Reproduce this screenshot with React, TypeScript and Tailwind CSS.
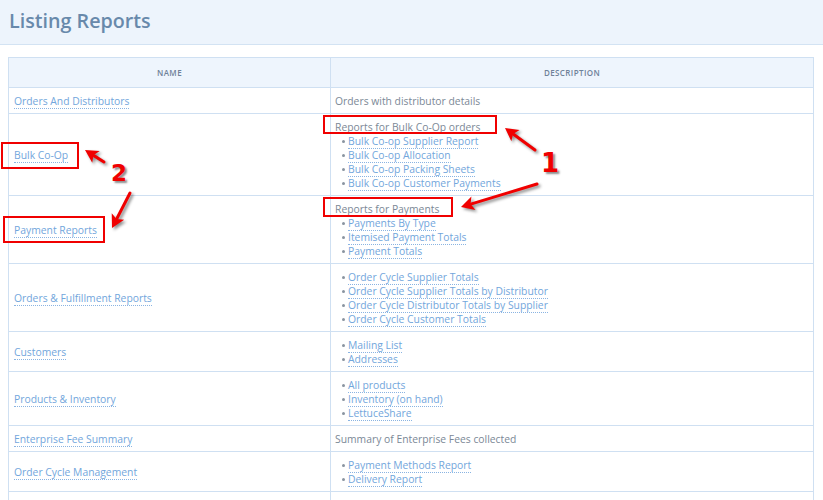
import React from "react";

type Row = {
  name: string;
  heading?: string;
  text?: string;
  items?: string[];
};

const rows: Row[] = [
  { name: "Orders And Distributors", text: "Orders with distributor details" },
  {
    name: "Bulk Co-Op",
    heading: "Reports for Bulk Co-Op orders",
    items: [
      "Bulk Co-op Supplier Report",
      "Bulk Co-op Allocation",
      "Bulk Co-op Packing Sheets",
      "Bulk Co-op Customer Payments",
    ],
  },
  {
    name: "Payment Reports",
    heading: "Reports for Payments",
    items: ["Payments By Type", "Itemised Payment Totals", "Payment Totals"],
  },
  {
    name: "Orders & Fulfillment Reports",
    items: [
      "Order Cycle Supplier Totals",
      "Order Cycle Supplier Totals by Distributor",
      "Order Cycle Distributor Totals by Supplier",
      "Order Cycle Customer Totals",
    ],
  },
  { name: "Customers", items: ["Mailing List", "Addresses"] },
  {
    name: "Products & Inventory",
    items: ["All products", "Inventory (on hand)", "LettuceShare"],
  },
  { name: "Enterprise Fee Summary", text: "Summary of Enterprise Fees collected" },
  {
    name: "Order Cycle Management",
    items: ["Payment Methods Report", "Delivery Report"],
  },
];

function Link({ children }: { children: React.ReactNode }) {
  return (
    <span className="text-[#72a6dc] border-b border-dotted border-[#8ab4e2]">
      {children}
    </span>
  );
}

function Arrow({
  x1,
  y1,
  x2,
  y2,
}: {
  x1: number;
  y1: number;
  x2: number;
  y2: number;
}) {
  const dx = x2 - x1;
  const dy = y2 - y1;
  const len = Math.sqrt(dx * dx + dy * dy);
  const ux = dx / len;
  const uy = dy / len;
  const headLen = 13;
  const headW = 7;
  const bx = x2 - ux * headLen;
  const by = y2 - uy * headLen;
  const px = -uy;
  const py = ux;
  const pts = `${x2},${y2} ${bx + px * headW},${by + py * headW} ${bx + ux * 3},${by + uy * 3} ${bx - px * headW},${by - py * headW}`;
  return (
    <g>
      <line
        x1={x1}
        y1={y1}
        x2={bx + ux * 2}
        y2={by + uy * 2}
        stroke="#f00000"
        strokeWidth={3}
        strokeLinecap="round"
      />
      <polygon points={pts} fill="#f00000" />
    </g>
  );
}

export default function App() {
  return (
    <div
      className="relative w-[823px] h-[500px] overflow-hidden bg-white"
      style={{ fontFamily: '"Open Sans", "DejaVu Sans", sans-serif' }}
    >
      <div className="h-[45px] bg-[#edf4fc] border-b border-[#d3e3f3] flex items-center pl-[9px]">
        <h1 className="text-[19.7px] leading-none text-[#6889ab] font-semibold pb-[3px]">
          Listing Reports
        </h1>
      </div>

      <div className="pt-[12px] px-[8px]">
        <table className="w-[806px] border-collapse text-[10.35px] leading-[14px] table-fixed">
          <thead>
            <tr className="bg-[#eef5fd]">
              <th className="w-[322px] h-[30px] border border-[#cfe0f2] text-[8px] font-semibold text-[#6f8299] tracking-[0.4px] text-center align-middle">
                NAME
              </th>
              <th className="border border-[#cfe0f2] text-[8px] font-semibold text-[#6f8299] tracking-[0.4px] text-center align-middle">
                DESCRIPTION
              </th>
            </tr>
          </thead>
          <tbody>
            {rows.map((r) => (
              <tr key={r.name}>
                <td className="border border-[#cfe0f2] pl-[5px] pr-[5px] pt-[6px] pb-[5px] align-middle">
                  <Link>{r.name}</Link>
                </td>
                <td className="border border-[#cfe0f2] pl-[4px] pr-[5px] pt-[6px] pb-[5px] align-top text-[#7b8896]">
                  {r.text && <div>{r.text}</div>}
                  {r.heading && <div>{r.heading}</div>}
                  {r.items && (
                    <ul>
                      {r.items.map((it) => (
                        <li key={it} className="block pl-[7px] leading-[14px]">
                          <span className="inline-block align-middle w-[3px] h-[3px] rounded-full bg-[#8a94a0] mr-[3px] mb-[2px]" />
                          <Link>{it}</Link>
                        </li>
                      ))}
                    </ul>
                  )}
                </td>
              </tr>
            ))}
            <tr>
              <td className="h-[40px] border border-[#cfe0f2]" />
              <td className="h-[40px] border border-[#cfe0f2]" />
            </tr>
          </tbody>
        </table>
      </div>

      {/* annotation boxes */}
      <div className="absolute left-[323px] top-[115px] w-[174px] h-[19px] border-2 border-[#f00000]" />
      <div className="absolute left-[1px] top-[142px] w-[78px] h-[27px] border-2 border-[#f00000]" />
      <div className="absolute left-[323px] top-[197px] w-[130px] h-[20px] border-2 border-[#f00000]" />
      <div className="absolute left-[3px] top-[216px] w-[102px] h-[27px] border-2 border-[#f00000]" />

      <svg
        className="absolute left-0 top-0 pointer-events-none"
        width={823}
        height={500}
        style={{ filter: "drop-shadow(2px 2px 1.5px rgba(0,0,0,0.45))" }}
      >
        <Arrow x1={535} y1={150} x2={505} y2={128} />
        <Arrow x1={537} y1={184} x2={461} y2={207} />
        <Arrow x1={104} y1={162} x2={85} y2={150} />
        <Arrow x1={130} y1={193} x2={112} y2={228} />
      </svg>

      <div
        className="absolute left-[541px] top-[148px] text-[26px] leading-[30px] font-bold text-[#f00000]"
        style={{
          fontFamily: '"DejaVu Sans", sans-serif',
          textShadow: "2px 2px 2px rgba(0,0,0,0.45)",
        }}
      >
        1
      </div>
      <div
        className="absolute left-[111px] top-[158px] text-[23px] leading-[30px] font-bold text-[#f00000]"
        style={{
          fontFamily: '"DejaVu Sans", sans-serif',
          textShadow: "2px 2px 2px rgba(0,0,0,0.45)",
        }}
      >
        2
      </div>
    </div>
  );
}
